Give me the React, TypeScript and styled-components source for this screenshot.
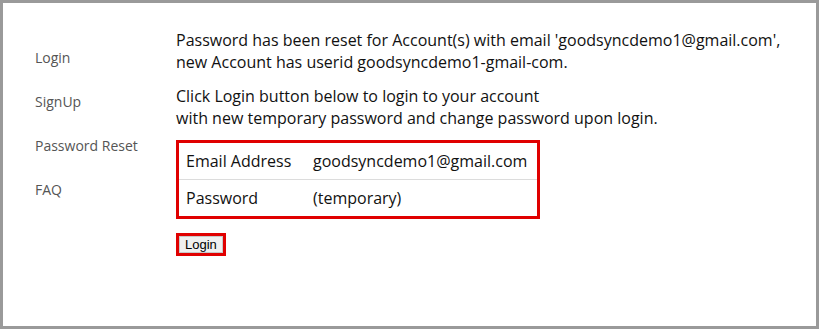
import React from "react"
import styled, { createGlobalStyle } from "styled-components"

const GlobalStyle = createGlobalStyle`
  html, body {
    margin: 0;
    padding: 0;
    background: #ffffff;
  }
  body {
    font-family: "Open Sans", "Noto Sans", sans-serif;
  }
`

const App = () => {
  const links = ["Login", "SignUp", "Password Reset", "FAQ"]

  return (
    <>
      <GlobalStyle />
      <Frame>
        <Sidebar>
          {links.map((name) => (
            <SideLink key={name}>{name}</SideLink>
          ))}
        </Sidebar>
        <Content>
          <Message>
            Password has been reset for Account(s) with email 'goodsyncdemo1@gmail.com',
            <br />
            new Account has userid goodsyncdemo1-gmail-com.
          </Message>
          <Message>
            Click Login button below to login to your account
            <br />
            with new temporary password and change password upon login.
          </Message>
          <InfoTable>
            <tbody>
              <Row>
                <Label>Email Address</Label>
                <Value>goodsyncdemo1@gmail.com</Value>
              </Row>
              <Row $last>
                <Label>Password</Label>
                <Value>(temporary)</Value>
              </Row>
            </tbody>
          </InfoTable>
          <ButtonWrap>
            <LoginButton>Login</LoginButton>
          </ButtonWrap>
        </Content>
      </Frame>
    </>
  )
}

const Frame = styled.div`
  box-sizing: border-box;
  width: 819px;
  height: 329px;
  border: 3px solid #9a9a9a;
  display: flex;
  flex-direction: row;
  background: #fff;
`
const Sidebar = styled.div`
  width: 173px;
  padding: 45px 0 0 32px;
  box-sizing: border-box;
  display: flex;
  flex-direction: column;
  gap: 24px;
`
const SideLink = styled.div`
  font-size: 14px;
  line-height: 20px;
  color: #555;
`
const Content = styled.div`
  display: flex;
  flex-direction: column;
  align-items: flex-start;
  padding-top: 26px;
`
const Message = styled.p`
  margin: 0 0 12px 0;
  font-size: 16px;
  line-height: 22px;
  color: #111;
`
const InfoTable = styled.table`
  border: 3px solid #e00000;
  border-collapse: collapse;
  width: 364px;
  margin-top: -1px;
  font-size: 16px;
  color: #111;
`
const Row = styled.tr<{ $last?: boolean }>`
  height: 38px;
  border-bottom: ${(p) => (p.$last ? "none" : "1px solid #dcdcdc")};
`
const Label = styled.td`
  width: 117px;
  padding: 0 0 0 7px;
  vertical-align: middle;
`
const Value = styled.td`
  padding: 0 8px 0 10px;
  vertical-align: middle;
`
const ButtonWrap = styled.div`
  margin-top: 14px;
  border: 3px solid #e00000;
  display: flex;
`
const LoginButton = styled.button`
  font-family: "Liberation Sans", Arial, sans-serif;
  font-size: 13px;
  line-height: 15px;
  padding: 0 5px;
  margin: 0;
  background: #efefef;
  border: 1px solid #c8c8c8;
  border-radius: 0;
  color: #000;
`

export default App
